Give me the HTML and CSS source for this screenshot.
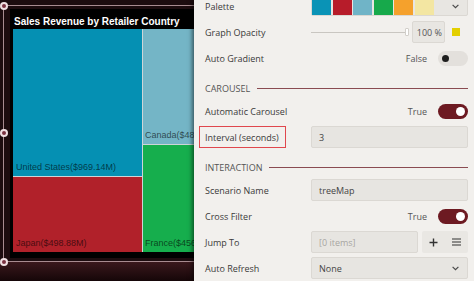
FILE: index.html
```html
<!DOCTYPE html>
<html>
<head>
<meta charset="utf-8">
<title>Tree Map</title>
<link rel="stylesheet" href="styles.css">
</head>
<body>
<div class="app">
  <div class="canvas">
    <div class="canvas-foot"></div>
    <div class="chart">
      <div class="chart-title">Sales Revenue by Retailer Country</div>
      <div class="treemap">
        <div class="tm-col tm-col-a">
          <div class="cell c-us"><span>United States($969.14M)</span></div>
          <div class="cell c-jp"><span>Japan($498.88M)</span></div>
        </div>
        <div class="tm-col tm-col-b">
          <div class="cell c-ca"><span>Canada($489.23M)</span></div>
          <div class="cell c-fr"><span>France($456.51M)</span></div>
        </div>
      </div>
    </div>
    <div class="frame"></div>
    <div class="handle h-top"></div>
    <div class="handle h-mid"></div>
    <div class="handle h-bot"></div>
  </div>

  <div class="panel">
    <div class="scroll">
      <div class="row">
        <div class="label">Palette</div>
        <div class="ctrl">
          <div class="palette">
            <div class="swatches">
              <span class="sw sw1"></span><span class="sw sw2"></span><span class="sw sw3"></span><span class="sw sw4"></span><span class="sw sw5"></span><span class="sw sw6"></span>
            </div>
            <div class="pal-drop"><svg class="chev" width="7" height="5" viewBox="0 0 7 5"><polyline points="0.6,0.8 3.5,3.7 6.4,0.8" fill="none" stroke="#4a4a4a" stroke-width="1.2"/></svg></div>
          </div>
        </div>
      </div>

      <div class="row">
        <div class="label">Graph Opacity</div>
        <div class="ctrl">
          <div class="slider"><span class="track"></span><span class="thumb"></span></div>
          <div class="pct">100 %</div>
          <span class="color-dot"></span>
        </div>
      </div>

      <div class="row">
        <div class="label">Auto Gradient</div>
        <div class="ctrl end">
          <span class="val">False</span>
          <span class="toggle off"><span class="knob"></span></span>
        </div>
      </div>

      <div class="section"><span class="sec-title">CAROUSEL</span><span class="sec-line"></span></div>

      <div class="row">
        <div class="label">Automatic Carousel</div>
        <div class="ctrl end">
          <span class="val">True</span>
          <span class="toggle on"><span class="knob"></span></span>
        </div>
      </div>

      <div class="row">
        <div class="label"><span class="highlight">Interval (seconds)</span></div>
        <div class="ctrl"><div class="input">3</div></div>
      </div>

      <div class="section"><span class="sec-title">INTERACTION</span><span class="sec-line"></span></div>

      <div class="row">
        <div class="label">Scenario Name</div>
        <div class="ctrl"><div class="input">treeMap</div></div>
      </div>

      <div class="row">
        <div class="label">Cross Filter</div>
        <div class="ctrl end">
          <span class="val">True</span>
          <span class="toggle on"><span class="knob"></span></span>
        </div>
      </div>

      <div class="row">
        <div class="label">Jump To</div>
        <div class="ctrl">
          <div class="input jump placeholder">[0 items]</div>
          <div class="btns">
            <svg class="ico" width="9" height="9" viewBox="0 0 9 9"><path d="M4.5 0.5V8.5M0.5 4.5H8.5" stroke="#333" stroke-width="1.4"/></svg>
            <svg class="ico" width="9" height="8" viewBox="0 0 9 8"><path d="M0 1H9M0 4H9M0 7H9" stroke="#333" stroke-width="1.2"/></svg>
          </div>
        </div>
      </div>

      <div class="row">
        <div class="label">Auto Refresh</div>
        <div class="ctrl">
          <div class="input select"><span>None</span><svg class="chev" width="7" height="5" viewBox="0 0 7 5"><polyline points="0.6,0.8 3.5,3.7 6.4,0.8" fill="none" stroke="#4a4a4a" stroke-width="1.2"/></svg></div>
        </div>
      </div>
    </div>
  </div>
</div>
</body>
</html>
```

FILE: styles.css
```css
* { box-sizing: border-box; margin: 0; padding: 0; }
html, body { width: 474px; height: 281px; overflow: hidden; }
body { font-family: "Open Sans", "Noto Sans", sans-serif; background: #1c0b0e; }

.app { display: flex; height: 281px; }

/* ---------- design canvas ---------- */
.canvas {
  position: relative;
  width: 194px;
  flex: none;
  overflow: hidden;
  background: #1d0c0f;
}
.canvas-foot {
  position: absolute;
  left: 0; right: 0; top: 262px; bottom: 0;
  background: linear-gradient(#3a181c, #150608);
}
.chart {
  position: absolute;
  left: 10px; top: 9px;
  width: 184px; height: 249px;
  background: #000;
  font-family: "Liberation Sans", Arial, sans-serif;
}
.chart-title {
  height: 20px;
  padding: 7px 0 0 4px;
  line-height: 12px;
  font-size: 10px;
  font-weight: bold;
  color: #fff;
  white-space: nowrap;
}
.treemap {
  margin-left: 3px;
  height: 223px;
  display: flex;
  gap: 1px;
  background: #cdd5d8;
}
.tm-col { display: flex; flex-direction: column; gap: 1px; flex: none; }
.tm-col-a { width: 129px; }
.tm-col-b { width: 51px; }
.cell {
  display: flex;
  align-items: flex-end;
  padding: 0 0 4px 3px;
  font-size: 9px;
  line-height: 10px;
  color: rgba(0, 0, 0, 0.62);
  white-space: nowrap;
  overflow: hidden;
}
.cell span { display: block; min-width: 0; overflow: hidden; }
.c-us { height: 147px; background: #0590b3; }
.c-jp { flex: 1; background: #b1212a; }
.c-ca { height: 115px; background: #74b5c6; padding-left: 2px; }
.c-fr { flex: 1; background: #16ae4d; padding-left: 2px; }

.frame {
  position: absolute;
  left: 3px; top: 5px;
  width: 400px; height: 257px;
  border: 1px solid #a88b90;
  border-right: none;
}
.handle {
  position: absolute;
  left: 0;
  width: 8px; height: 8px;
  border-radius: 50%;
  background: #7a3140;
  border: 2px solid #f0dfe2;
}
.h-top { top: 2px; }
.h-mid { top: 129px; }
.h-bot { top: 258px; }

/* ---------- property panel ---------- */
.panel {
  flex: 1;
  position: relative;
  overflow: hidden;
  background: #f2f0ed;
  box-shadow: -2px 0 4px rgba(0, 0, 0, 0.5);
  padding: 0 6px 0 11px;
  font-size: 9px;
  color: #3a3a3a;
}
.scroll { margin-top: -7px; }

.row { display: flex; align-items: center; height: 26px; }
.label { width: 106px; flex: none; white-space: nowrap; }
.ctrl { flex: 1; display: flex; align-items: center; min-width: 0; }
.ctrl.end { justify-content: flex-end; gap: 11px; }

.section {
  display: flex;
  align-items: center;
  gap: 7px;
  height: 27px;
  padding-top: 8px;
  color: #555;
}
.sec-title { white-space: nowrap; }
.sec-line { flex: 1; height: 1px; background: #8a4b51; }

/* palette */
.palette {
  flex: 1;
  display: flex;
  height: 19px;
  border: 1px solid #dbd8d3;
  background: #e8e6e2;
  border-radius: 2px;
}
.swatches { display: flex; gap: 1.5px; }
.sw { width: 19px; height: 17px; display: block; }
.sw1 { background: #0a93b6; }
.sw2 { background: #b71c2a; }
.sw3 { background: #70b4c7; }
.sw4 { background: #17a94b; }
.sw5 { background: #f5a12c; }
.sw6 { background: #f3e6a2; }
.pal-drop { flex: 1; display: flex; align-items: center; justify-content: flex-end; padding: 0 8px 0 0; }
.chev { display: block; }

/* opacity */
.slider { position: relative; width: 98px; height: 10px; flex: none; }
.track { position: absolute; left: 0; right: 2px; top: 5px; height: 1px; background: #c9c6c1; }
.thumb {
  position: absolute; right: 0; top: 1px;
  width: 4px; height: 8px;
  background: #fff;
  border: 1px solid #d2cfca;
  border-radius: 1px;
}
.pct {
  width: 33px; height: 22px;
  margin-left: 3px;
  background: #e8e6e2;
  border: 1px solid #dbd8d3;
  border-radius: 2px;
  display: flex; align-items: center; justify-content: flex-end;
  padding-right: 2px;
  color: #555;
}
.color-dot { width: 8px; height: 8px; margin-left: 7px; background: #e3cf00; display: block; }

/* toggles */
.val { color: #555; }
.toggle { position: relative; display: block; width: 30px; height: 15px; border-radius: 8px; }
.toggle.on { background: #6d1a22; }
.toggle.off { background: #e3e0dc; }
.knob { position: absolute; border-radius: 50%; display: block; }
.on .knob { width: 9px; height: 9px; right: 3px; top: 3px; background: #fff; }
.off .knob { width: 7px; height: 7px; left: 4px; top: 4px; background: #1e1e1e; }

/* inputs */
.input {
  flex: 1;
  height: 22px;
  display: flex;
  align-items: center;
  padding-left: 7px;
  background: #e7e5e1;
  border: 1px solid #dbd8d3;
  border-radius: 2px;
  color: #444;
  white-space: nowrap;
}
.input.jump { flex: none; width: 107px; }
.placeholder { color: #a8a6a2; }
.select { justify-content: space-between; padding-right: 8px; }

.highlight {
  display: inline-flex;
  align-items: center;
  height: 22px;
  margin-left: -6px;
  padding: 0 6px 0 5px;
  border: 1.5px solid #e0474d;
}

.btns {
  margin-left: 4px;
  flex: 1;
  height: 22px;
  display: flex;
  align-items: center;
  justify-content: space-around;
  background: #e9e7e3;
  border-radius: 2px;
}
.ico { display: block; }
```
